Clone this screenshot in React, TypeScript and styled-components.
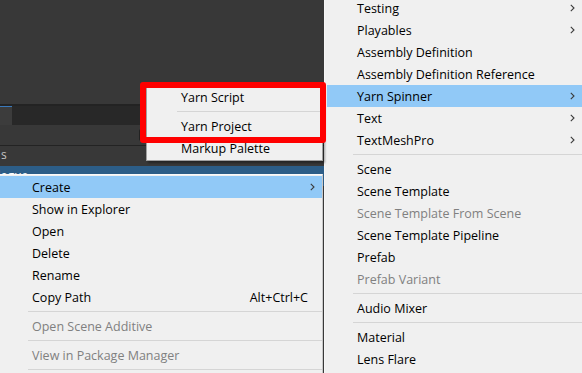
import React, { FC } from "react";
import styled, { createGlobalStyle } from "styled-components";

type Entry =
  | { kind: "item"; label: string; active?: boolean; disabled?: boolean; sub?: boolean; shortcut?: string }
  | { kind: "sep" };

const leftItems: Entry[] = [
  { kind: "item", label: "Create", active: true, sub: true },
  { kind: "item", label: "Show in Explorer" },
  { kind: "item", label: "Open" },
  { kind: "item", label: "Delete" },
  { kind: "item", label: "Rename" },
  { kind: "item", label: "Copy Path", shortcut: "Alt+Ctrl+C" },
  { kind: "sep" },
  { kind: "item", label: "Open Scene Additive", disabled: true },
  { kind: "sep" },
  { kind: "item", label: "View in Package Manager", disabled: true },
  { kind: "sep" },
];

const rightItems: Entry[] = [
  { kind: "item", label: "Testing", sub: true },
  { kind: "item", label: "Playables", sub: true },
  { kind: "item", label: "Assembly Definition" },
  { kind: "item", label: "Assembly Definition Reference" },
  { kind: "item", label: "Yarn Spinner", active: true, sub: true },
  { kind: "item", label: "Text", sub: true },
  { kind: "item", label: "TextMeshPro", sub: true },
  { kind: "sep" },
  { kind: "item", label: "Scene" },
  { kind: "item", label: "Scene Template" },
  { kind: "item", label: "Scene Template From Scene", disabled: true },
  { kind: "item", label: "Scene Template Pipeline" },
  { kind: "item", label: "Prefab" },
  { kind: "item", label: "Prefab Variant", disabled: true },
  { kind: "sep" },
  { kind: "item", label: "Audio Mixer" },
  { kind: "sep" },
  { kind: "item", label: "Material" },
  { kind: "item", label: "Lens Flare" },
];

const yarnItems: Entry[] = [
  { kind: "item", label: "Yarn Script" },
  { kind: "sep" },
  { kind: "item", label: "Yarn Project" },
  { kind: "item", label: "Markup Palette" },
];

const Chevron: FC = () => (
  <ChevronSvg width="5" height="8" viewBox="0 0 5 8">
    <path d="M0.8 0.8 L4 4 L0.8 7.2" fill="none" stroke="#3c3c3c" strokeWidth="1.1" />
  </ChevronSvg>
);

const MenuEntries: FC<{ items: Entry[]; indent: number; sepIndent: number; chevronGap: number }> = ({
  items,
  indent,
  sepIndent,
  chevronGap,
}) => (
  <>
    {items.map((it, i) =>
      it.kind === "sep" ? (
        <Separator key={i} $indent={sepIndent} />
      ) : (
        <Item key={i} $active={it.active} $disabled={it.disabled} $indent={indent} $gap={chevronGap}>
          <Label>{it.label}</Label>
          {it.shortcut && <Shortcut>{it.shortcut}</Shortcut>}
          {it.sub && <Chevron />}
        </Item>
      )
    )}
  </>
);

const App: FC = () => {
  return (
    <>
      <GlobalStyle />
      <Stage>
        <Editor>
          <SceneView />
          <TabBar>
            <Tab />
          </TabBar>
          <Toolbar>
            <SearchEdge />
          </Toolbar>
          <ListRow>s</ListRow>
          <ListRow $selected>
            <Clipped>Dialogue</Clipped>
          </ListRow>
        </Editor>

        <AssetMenu>
          <MenuEntries items={leftItems} indent={32} sepIndent={28} chevronGap={7} />
        </AssetMenu>

        <CreateMenu>
          <MenuEntries items={rightItems} indent={30} sepIndent={26} chevronGap={9} />
        </CreateMenu>

        <YarnMenu>
          <MenuEntries items={yarnItems} indent={34} sepIndent={30} chevronGap={5} />
        </YarnMenu>

        <Highlight />
      </Stage>
    </>
  );
};

const GlobalStyle = createGlobalStyle`
  html, body {
    margin: 0;
    padding: 0;
    background: #383838;
  }
  body {
    font-family: "Open Sans", "Noto Sans", "Liberation Sans", sans-serif;
  }
`;

const Stage = styled.div`
  position: relative;
  width: 582px;
  height: 373px;
  overflow: hidden;
`;

const Editor = styled.div`
  display: flex;
  flex-direction: column;
  height: 100%;
  background: #383838;
`;

const SceneView = styled.div`
  height: 104px;
  flex: none;
  background: #383838;
  border-bottom: 2px solid #232323;
`;

const TabBar = styled.div`
  display: flex;
  height: 19px;
  flex: none;
  background: #282828;
`;

const Tab = styled.div`
  width: 12px;
  background: #3c3c3c;
  border-top: 1px solid #3a79bb;
`;

const Toolbar = styled.div`
  display: flex;
  justify-content: flex-start;
  align-items: center;
  height: 20px;
  flex: none;
  padding-left: 139px;
  border-bottom: 1px solid #232323;
`;

const SearchEdge = styled.div`
  width: 8px;
  height: 12px;
  background: #222222;
  border-radius: 2px;
`;

const ListRow = styled.div<{ $selected?: boolean }>`
  height: 20px;
  flex: none;
  overflow: hidden;
  padding-left: 1px;
  font-size: 12px;
  line-height: 18px;
  color: ${(p) => (p.$selected ? "#ffffff" : "#c4c4c4")};
  background: ${(p) => (p.$selected ? "#2c5d87" : "#383838")};
`;

const Clipped = styled.span`
  display: block;
  margin-left: -22px;
  margin-top: 1px;
`;

const Menu = styled.div`
  position: absolute;
  box-sizing: border-box;
  display: flex;
  flex-direction: column;
  background: #f0f0f0;
  font-size: 12.5px;
  color: #000;
`;

const AssetMenu = styled(Menu)`
  left: 0;
  top: 174px;
  width: 323px;
  height: 220px;
  padding-top: 1px;
  border-top: 1px solid #fafafa;
  border-right: 1px solid #c8c8c8;
`;

const CreateMenu = styled(Menu)`
  left: 324px;
  top: -6px;
  width: 262px;
  height: 390px;
  padding: 3px 2px 0 2px;
  border-left: 1px solid #f6f6f6;
`;

const YarnMenu = styled(Menu)`
  left: 146px;
  top: 84px;
  width: 177px;
  padding: 1px 0 1px 0;
  border: 1px solid #a0a0a0;
  box-shadow: 2px 2px 2px rgba(0, 0, 0, 0.35);
`;

const Item = styled.div<{ $active?: boolean; $disabled?: boolean; $indent: number; $gap: number }>`
  display: flex;
  align-items: center;
  height: 22px;
  flex: none;
  padding-left: ${(p) => p.$indent}px;
  padding-right: ${(p) => p.$gap}px;
  background: ${(p) => (p.$active ? "#91c9f7" : "transparent")};
  color: ${(p) => (p.$disabled ? "#808080" : "#000000")};
  white-space: nowrap;
`;

const Label = styled.span`
  flex: 1;
`;

const Shortcut = styled.span`
  margin-right: 7px;
`;

const ChevronSvg = styled.svg`
  display: block;
  flex: none;
`;

const Separator = styled.div<{ $indent: number }>`
  flex: none;
  height: 1px;
  margin: 3px 0 3px ${(p) => p.$indent}px;
  background: #d5d5d5;
`;

const Highlight = styled.div`
  position: absolute;
  left: 140px;
  top: 82px;
  width: 186px;
  height: 61px;
  box-sizing: border-box;
  border: 6px solid #ff0000;
  border-radius: 3px;
`;

export default App;
